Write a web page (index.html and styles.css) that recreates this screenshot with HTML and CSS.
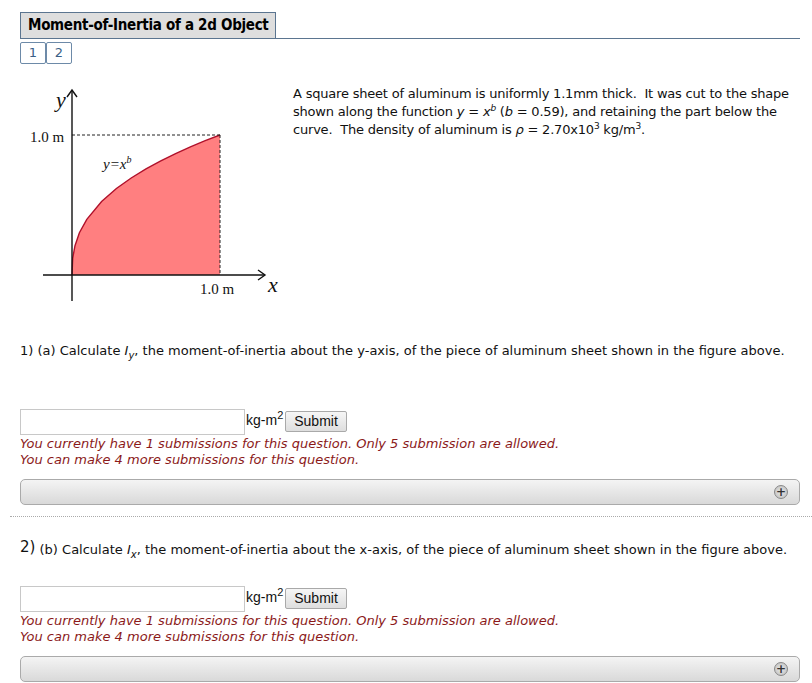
FILE: index.html
```html
<!DOCTYPE html>
<html>
<head>
<meta charset="utf-8">
<link rel="stylesheet" href="styles.css">
</head>
<body>
<div class="page">
  <div class="titlebar"><h1 class="title">Moment-of-Inertia of a 2d Object</h1></div>
  <div class="tabs"><span class="tab">1</span><span class="tab">2</span></div>

  <div class="intro">
    <svg class="figure" width="270" height="222" viewBox="0 0 270 222">
      <path class="area" d="M52,189 L52.7,172.2 L55,159.7 L59.4,146.7 L66.8,133.3 L81.6,115.5 L96.4,102.5 L111.2,92 L126,82.9 L140.8,74.9 L155.6,67.6 L170.4,60.9 L185.2,54.7 L200,49 L200,189 Z"/>
      <path class="curve" d="M52,189 L52.7,172.2 L55,159.7 L59.4,146.7 L66.8,133.3 L81.6,115.5 L96.4,102.5 L111.2,92 L126,82.9 L140.8,74.9 L155.6,67.6 L170.4,60.9 L185.2,54.7 L200,49"/>
      <line class="dash" x1="52" y1="49" x2="200" y2="49"/>
      <line class="dash" x1="200" y1="49" x2="200" y2="189"/>
      <line class="axis" x1="52" y1="215" x2="52" y2="4"/>
      <polyline class="axis" points="47,11 52,4 57,11"/>
      <line class="axis" x1="23" y1="189" x2="245" y2="189"/>
      <polyline class="axis" points="238,184 245,189 238,194"/>
      <text class="lbl it big" x="36" y="21">y</text>
      <text class="lbl" x="10" y="56">1.0 m</text>
      <text class="lbl it" x="83" y="83">y=x<tspan class="sup" dy="-6">b</tspan></text>
      <text class="lbl" x="180" y="208">1.0 m</text>
      <text class="lbl it big" x="248" y="206">x</text>
    </svg>
    <p class="desc">A square sheet of aluminum is uniformly 1.1mm thick.&nbsp; It was cut to the shape shown along the function <i>y</i> = <i>x</i><sup><i>b</i></sup> (<i>b</i> = 0.59), and retaining the part below the curve.&nbsp; The density of aluminum is <i>ρ</i> = 2.70x10<sup>3</sup> kg/m<sup>3</sup>.</p>
  </div>

  <div class="question q1">
    <p class="qtext">1) (a) Calculate <i>I<sub>y</sub></i>, the moment-of-inertia about the y-axis, of the piece of aluminum sheet shown in the figure above.</p>
    <div class="answer">
      <input class="field" type="text"><span class="unit">kg-m<sup>2</sup></span><button class="submit">Submit</button>
    </div>
    <p class="warn">You currently have 1 submissions for this question. Only 5 submission are allowed.<br>You can make 4 more submissions for this question.</p>
    <div class="bar"><span class="plus">+</span></div>
  </div>

  <div class="sep"></div>

  <div class="question q2">
    <p class="qtext"><span class="num">2)</span> (b) Calculate <i>I<sub>x</sub></i>, the moment-of-inertia about the x-axis, of the piece of aluminum sheet shown in the figure above.</p>
    <div class="answer">
      <input class="field" type="text"><span class="unit">kg-m<sup>2</sup></span><button class="submit">Submit</button>
    </div>
    <p class="warn">You currently have 1 submissions for this question. Only 5 submission are allowed.<br>You can make 4 more submissions for this question.</p>
    <div class="bar"><span class="plus">+</span></div>
  </div>
</div>
</body>
</html>
```

FILE: styles.css
```css
html, body { margin: 0; padding: 0; background: #fff; }
body { font-family: "DejaVu Sans", sans-serif; font-size: 13px; color: #111; }
.page { padding: 12px 12px 0 20px; }

.titlebar { border-bottom: 1px solid #5b7590; display: flex; }
.title {
  margin: 0; font-size: 15px; font-weight: bold; color: #000;
  font-family: "DejaVu Sans Condensed", "DejaVu Sans", sans-serif;
  background: #dedede; border: 1px solid #5b7590; border-bottom: none;
  padding: 3px 6px 4px 7px; line-height: 18px; white-space: nowrap;
  letter-spacing: -0.3px;
}
.tabs { display: flex; margin-top: 3px; }
.tab {
  width: 24px; height: 20px; border: 1px solid #6d8aa8; border-radius: 2px;
  color: #3b5f86; text-align: center; line-height: 20px; font-size: 13px;
  font-family: "DejaVu Sans", sans-serif;
}

.intro { display: flex; margin-top: 22px; }
.figure { display: block; flex: none; }
.area { fill: #ff7f80; }
.curve { fill: none; stroke: #b0102a; stroke-width: 1.4; }
.dash { stroke: #222; stroke-width: 1; stroke-dasharray: 3 2; }
.axis { fill: none; stroke: #111; stroke-width: 1.4; }
.lbl { font-family: "Liberation Serif", serif; font-size: 15px; fill: #111; }
.it { font-style: italic; }
.big { font-size: 22px; }
.sup { font-size: 10px; }
.desc { margin: -1px 0 0 3px; line-height: 18px; width: 507px; letter-spacing: -0.2px; }
.desc sup { line-height: 0; font-size: 9px; }

.qtext { margin: 0; line-height: 18px; }
.q1 .qtext { margin-top: 34px; }
.q2 .qtext { margin-top: 21px; }
.qtext sub { font-size: 10px; line-height: 0; }
.num { font-size: 15px; vertical-align: 2px; }
.answer { display: flex; align-items: center; margin-top: 49px; height: 26px; }
.q2 .answer { margin-top: 27px; }
.field {
  width: 225px; height: 26px; box-sizing: border-box; border: 1px solid #c8c8c8;
  margin: 0; padding: 0;
}
.unit { font-family: "Liberation Sans", Arial, sans-serif; font-size: 14px; margin: 0 2px 0 1px; position: relative; top: -2px; }
.unit sup { font-size: 11px; line-height: 0; }
.submit {
  font-family: "Liberation Sans", Arial, sans-serif; font-size: 14px;
  height: 21px; padding: 0 8px; border: 1px solid #a9a9a9; border-radius: 2px;
  background: linear-gradient(#f6f6f6, #dedede); color: #111; margin-top: -2px;
}
.warn { margin: 1px 0 0 0; color: #8b1a1a; font-style: italic; line-height: 16px; }
.bar {
  margin-top: 11px; height: 24px; border: 1px solid #aaa; border-radius: 5px;
  background: linear-gradient(#f4f4f4, #d9d9d9); display: flex; align-items: center;
  justify-content: flex-end; padding-right: 11px;
}
.plus {
  width: 12px; height: 12px; border-radius: 50%; border: 1px solid #888;
  background: radial-gradient(#e8e8e8, #bcbcbc); color: #333;
  font-size: 12px; line-height: 12px; text-align: center; font-weight: bold;
  font-family: "DejaVu Sans", sans-serif;
}
.sep { border-top: 1px dotted #aaa; margin: 11px -12px 0 -10px; }
```
